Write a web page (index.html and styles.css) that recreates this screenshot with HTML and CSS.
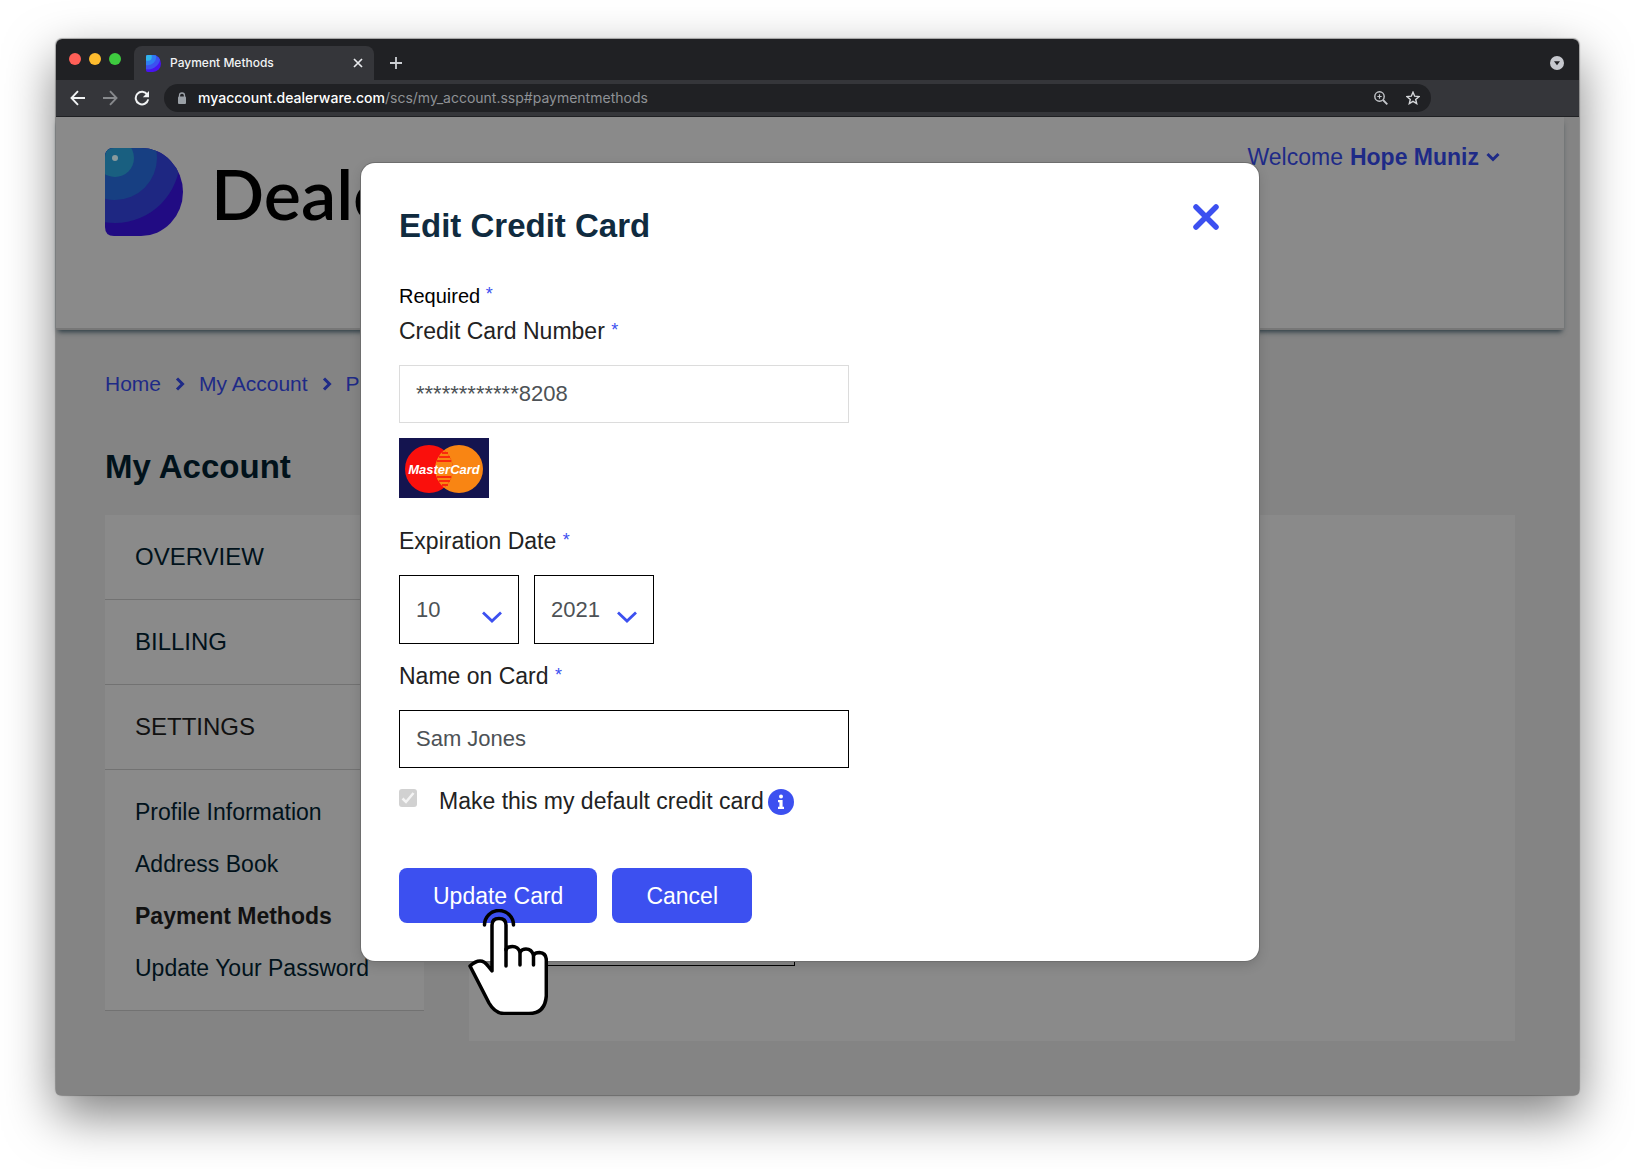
FILE: index.html
```html
<!DOCTYPE html>
<html lang="en">
<head>
<meta charset="utf-8">
<title>Payment Methods</title>
<link rel="stylesheet" href="styles.css">
</head>
<body>
<div class="window">
  <div class="tabstrip">
    <div class="lights"><span class="light red"></span><span class="light yellow"></span><span class="light green"></span></div>
    <div class="tab">
      <svg class="favicon" viewBox="0 0 78 88"><use href="#brand-bright"/></svg>
      <span class="tab-title">Payment Methods</span>
      <button class="chrome-btn" aria-label="Close tab"><svg width="10" height="10" viewBox="0 0 10 10"><path d="M1 1l8 8M9 1l-8 8" stroke="#e8eaed" stroke-width="1.7"/></svg></button>
    </div>
    <button class="chrome-btn new-tab" aria-label="New tab"><svg width="12" height="12" viewBox="0 0 12 12"><path d="M6 0v12M0 6h12" stroke="#cdd0d4" stroke-width="1.8"/></svg></button>
    <button class="chrome-btn tab-search" aria-label="Search tabs"><svg width="14" height="14" viewBox="0 0 14 14"><circle cx="7" cy="7" r="7" fill="#c6c8ce"/><path d="M4 5.2h6L7 9.2z" fill="#202124"/></svg></button>
  </div>
  <div class="toolbar">
    <button class="chrome-btn" aria-label="Back"><svg width="16" height="16" viewBox="0 0 16 16" fill="none" stroke="#f1f3f4" stroke-width="1.9"><path d="M15 8H2M8 1.2L1.5 8 8 14.8"/></svg></button>
    <button class="chrome-btn" aria-label="Forward"><svg width="16" height="16" viewBox="0 0 16 16" fill="none" stroke="#87898c" stroke-width="1.9"><path d="M1 8h13M8 1.2L14.500 8 8 14.8"/></svg></button>
    <button class="chrome-btn" aria-label="Reload"><svg width="16" height="16" viewBox="0 0 16 16"><path d="M13.300 4.600A6.300 6.300 0 1 0 14.200 9.400" fill="none" stroke="#f1f3f4" stroke-width="2"/><path d="M15 1v6.200H8.800z" fill="#f1f3f4"/></svg></button>
    <div class="address">
      <svg width="10" height="13" viewBox="0 0 10 13"><path d="M2.500 6V3.500a2.500 2.500 0 0 1 5 0V6" fill="none" stroke="#9aa0a6" stroke-width="1.300"/><rect x="1" y="4.500" width="8" height="7.500" rx="1" fill="#9aa0a6"/></svg>
      <span class="url"><b>myaccount.dealerware.com</b>/scs/my_account.ssp#paymentmethods</span>
      <button class="chrome-btn" aria-label="Zoom"><svg width="14" height="14" viewBox="0 0 14 14" fill="none" stroke="#c4c7cb"><circle cx="5.500" cy="5.500" r="4.700" stroke-width="1.400"/><path d="M9 9l4.300 4.300" stroke-width="1.800"/><path d="M5.500 3.300v4.400M3.300 5.500h4.400" stroke-width="1.200"/></svg></button>
      <button class="chrome-btn" aria-label="Bookmark"><svg width="14" height="14" viewBox="0 0 14 14"><path d="M7 1.200l1.700 4 4.300.4-3.300 2.800 1 4.200L7 10.400l-3.700 2.200 1-4.200L1 5.600l4.300-.4z" fill="none" stroke="#d5d7da" stroke-width="1.400"/></svg></button>
    </div>
  </div>
  <div class="viewport">
    <div class="page">
      <header class="site-header">
        <a class="brand" href="#">
          <svg class="brand-mark" viewBox="0 0 78 88" aria-hidden="true">
            <defs>
              <clipPath id="mark"><path d="M9 0H36A42 44 0 0 1 36 88H9Q0 88 0 79V9Q0 0 9 0Z"/></clipPath>
              <g id="brand-bright" clip-path="url(#mark)"><path fill="#4713f0" d="M0 0h78v88H0z"/><circle cx="10" cy="10" r="65" fill="#3c50f0"/><circle cx="10" cy="10" r="43" fill="#2f7df2"/><circle cx="10" cy="10" r="20" fill="#31b4ea"/></g>
            </defs>
            <g clip-path="url(#mark)"><path fill="#210b83" d="M0 0h78v88H0z"/><circle cx="10" cy="10" r="65" fill="#1e2782"/><circle cx="10" cy="10" r="42" fill="#173f82"/><circle cx="10" cy="10" r="19" fill="#195f80"/><circle cx="10" cy="10" r="3" fill="#8a9a9c"/></g>
          </svg>
          <span class="brand-name">Deale</span>
        </a>
        <a class="welcome" href="#">Welcome <b>Hope Muniz</b>
          <svg width="14" height="10" viewBox="0 0 14 10"><path d="M1.500 2L7 7.500 12.500 2" fill="none" stroke="#1e2a87" stroke-width="3"/></svg>
        </a>
      </header>
      <nav class="crumbs" aria-label="Breadcrumb">
        <a href="#">Home</a>
        <svg width="10" height="14" viewBox="0 0 10 14"><path d="M2 1.500L7.500 7 2 12.500" fill="none" stroke="#1e2a87" stroke-width="3"/></svg>
        <a href="#">My Account</a>
        <svg width="10" height="14" viewBox="0 0 10 14"><path d="M2 1.500L7.500 7 2 12.500" fill="none" stroke="#1e2a87" stroke-width="3"/></svg>
        <a href="#">Payment Methods</a>
      </nav>
      <h1 class="page-title">My Account</h1>
      <div class="columns">
        <nav class="sidebar" aria-label="My Account">
          <a class="section" href="#">OVERVIEW</a>
          <a class="section" href="#">BILLING</a>
          <a class="section open" href="#">SETTINGS</a>
          <div class="links">
            <a href="#">Profile Information</a>
            <a href="#">Address Book</a>
            <a class="current" href="#">Payment Methods</a>
            <a href="#">Update Your Password</a>
          </div>
        </nav>
        <main class="content"><div class="card-box"></div></main>
      </div>
      <div class="modal-layer">
        <form class="modal" role="dialog" aria-labelledby="dialog-title">
          <div class="modal-head">
            <h2 id="dialog-title">Edit Credit Card</h2>
            <button type="button" class="close" aria-label="Close"><svg width="26" height="26" viewBox="0 0 26 26"><path d="M3 3l20 20M23 3L3 23" stroke="#3c50f0" stroke-width="5.500" stroke-linecap="round"/></svg></button>
          </div>
          <p class="required">Required <i>*</i></p>
          <label class="label" for="number">Credit Card Number <i>*</i></label>
          <input class="text disabled" id="number" value="************8208" readonly>
          <svg class="mastercard" viewBox="0 0 90 60" role="img" aria-label="MasterCard">
            <path fill="#14144f" d="M0 0h90v60H0z"/>
            <circle cx="60" cy="31" r="24" fill="#f98513"/><circle cx="30" cy="31" r="24" fill="#fa0f0c"/>
            <path d="M45 12.300A24 24 0 0 1 45 49.700A24 24 0 0 1 45 12.300Z" fill="#f98513"/>
            <path d="M43 15h6M40 19h11M38 23h14M38 39h14M40 43h11M43 47h6" stroke="#fa2a0c" stroke-width="2"/>
            <text class="mc-name" x="45" y="36" text-anchor="middle">MasterCard</text>
          </svg>
          <label class="label" for="month">Expiration Date <i>*</i></label>
          <div class="selects">
            <select id="month" aria-label="Expiration month"><option>10</option></select>
            <select id="year" aria-label="Expiration year"><option>2021</option></select>
          </div>
          <label class="label name-label" for="name">Name on Card <i>*</i></label>
          <input class="text" id="name" value="Sam Jones">
          <div class="default-row">
            <input type="checkbox" id="default" checked disabled>
            <label for="default">Make this my default credit card</label>
            <svg class="info" width="26" height="26" viewBox="0 0 26 26"><circle cx="13" cy="13" r="13" fill="#3c50f0"/><circle cx="13" cy="7.500" r="2" fill="#fff"/><path d="M10 11h4.600v6.800H16V20h-6v-2.200h1.400v-4.600H10z" fill="#fff"/></svg>
          </div>
          <div class="actions">
            <button type="button" class="primary">Update Card
              <svg class="pointer" viewBox="0 0 80 106" aria-hidden="true">
                <path d="M16.500 16A14 14 0 0 1 45.500 16" fill="none" stroke="#000" stroke-width="3.500" stroke-linecap="round"/>
                <path d="M24 62V16Q24 9.500 31 9.500T38 16V41Q39 37.500 44.500 37.500Q50 37.500 52 43Q54 40 58 40Q63.500 40 65.500 46Q67 43.500 71.500 43.500Q78.300 44 78.300 51V87Q77 104.500 61 104.500H36Q27 104.500 21 94L2 57Q13 47 20 57Z" fill="#fff" stroke="#000" stroke-width="3.500" stroke-linejoin="round"/>
                <path d="M38 40V57M52 43V56M65.500 46V56" fill="none" stroke="#000" stroke-width="3.500" stroke-linecap="round"/>
              </svg>
            </button>
            <button type="button" class="primary">Cancel</button>
          </div>
        </form>
      </div>
    </div>
  </div>
</div>
</body>
</html>
```
FILE: styles.css
```css
* { box-sizing: border-box; }
body {
  margin: 0;
  padding: 39px 56px 74px;
  background: #fff;
  font: 23px/28px "Liberation Sans", Arial, sans-serif;
  color: #222;
}
button { font: inherit; border: 0; padding: 0; background: none; }
a { text-decoration: none; }
svg { display: block; flex: none; }
h1, h2, p { margin: 0; }

.window {
  border-radius: 6px;
  box-shadow: 0 0 1px 1px rgba(0, 0, 0, .3), 0 20px 50px rgba(0, 0, 0, .5);
}

/* Browser chrome */
.chrome-btn { display: flex; flex: none; }
.tabstrip {
  display: flex;
  align-items: flex-end;
  height: 41px;
  border-radius: 6px 6px 0 0;
  background: #202124;
}
.lights { display: flex; gap: 8px; padding: 0 13px 15px; }
.light { width: 12px; height: 12px; border-radius: 50%; }
.red { background: #ff5f57; }
.yellow { background: #febc2e; }
.green { background: #3ecb3f; }
.tab {
  display: flex;
  align-items: center;
  width: 240px;
  height: 34px;
  padding: 0 11px 0 12px;
  border-radius: 8px 8px 0 0;
  background: #35363a;
}
.favicon { width: 15px; height: 17px; }
.tab-title {
  flex: 1;
  padding-left: 9px;
  font: 500 12px/16px Inter, sans-serif;
  color: #f1f3f4;
}
.new-tab { margin: 0 0 11px 16px; }
.tab-search { margin: 0 15px 10px auto; }
.toolbar {
  display: flex;
  align-items: center;
  gap: 16px;
  height: 37px;
  padding: 0 148px 0 14px;
  border-bottom: 1px solid #202124;
  background: #35363a;
}
.address {
  display: flex;
  flex: 1;
  align-items: center;
  gap: 18px;
  height: 28px;
  margin-left: -2px;
  padding: 0 11px 0 13px;
  border-radius: 14px;
  background: #202124;
}
.url {
  flex: 1;
  margin-left: -7px;
  font: 14px/20px Inter, sans-serif;
  color: #8f9296;
}
.url b { font-weight: 500; color: #fff; }

/* Page behind the dialog */
.viewport {
  padding-right: 15px;
  border-radius: 0 0 4px 4px;
  background: #848484;
}
.page { position: relative; padding-bottom: 54px; }
.site-header {
  display: flex;
  justify-content: space-between;
  align-items: flex-start;
  height: 213px;
  padding: 31px 64px 0 49px;
  border-bottom: 2px solid #777;
  background: #8a8a8a;
  box-shadow: 0 4px 5px -2px #2c3c44;
}
.brand { display: flex; align-items: center; gap: 28px; color: #000; }
.brand-mark { width: 78px; height: 88px; }
.brand-name {
  padding-top: 2px;
  font: 600 70px/86px Lato, sans-serif;
}
.welcome {
  display: flex;
  align-items: center;
  gap: 7px;
  margin-top: -5px;
  color: #1e2a87;
}
.crumbs {
  display: flex;
  align-items: center;
  gap: 14px;
  padding: 40px 49px 0;
  font-size: 21px;
}
.crumbs a { color: #1e2a87; }
.page-title {
  padding: 49px 49px 0;
  font-size: 33px;
  line-height: 40px;
  color: #01121b;
}
.columns {
  display: flex;
  align-items: flex-start;
  gap: 45px;
  padding: 28px 49px 0;
}
.sidebar {
  width: 319px;
  border-bottom: 1px solid #727272;
  background: #8a8a8a;
}
.section {
  display: block;
  padding: 28px 30px;
  border-bottom: 1px solid #727272;
  font-size: 24px;
  color: #01121b;
}
.links {
  display: flex;
  flex-direction: column;
  gap: 24px;
  padding: 28px 30px;
}
.links a { color: #01121b; white-space: nowrap; }
.sidebar .open, .links .current { color: #111; }
.current { font-weight: bold; }
.content {
  display: flex;
  flex: 1;
  align-items: flex-end;
  height: 526px;
  padding: 0 30px 75px;
  background: #8a8a8a;
}
.card-box { width: 296px; height: 300px; border: 1px solid #000; }

/* Dialog */
.modal-layer {
  position: absolute;
  inset: 0;
  display: flex;
  justify-content: center;
  align-items: flex-start;
  padding-top: 46px;
}
.modal {
  display: flex;
  flex-direction: column;
  align-items: flex-start;
  width: 898px;
  padding: 38px;
  border-radius: 14px;
  background: #fff;
  box-shadow: 0 0 0 1px #6e6e6e, 0 4px 12px rgba(0, 0, 0, .15);
}
.modal-head {
  display: flex;
  justify-content: space-between;
  align-items: flex-start;
  width: 100%;
}
.close { padding: 3px 2px 0 0; }
.modal h2 { padding-top: 5px; font-size: 33px; line-height: 40px; color: #102b3f; }
.modal i { font-style: normal; font-size: 18px; vertical-align: 3px; line-height: 1; color: #3c50f0; }
.required { margin-top: 36px; font-size: 20px; color: #000; }
.label { margin-top: 7px; }
.text {
  width: 450px;
  height: 58px;
  margin-top: 20px;
  padding: 0 16px;
  border: 1px solid #000;
  font: inherit;
  font-size: 22px;
  color: #4d5256;
}
.disabled { border-color: #dcdcdc; }
.mastercard { width: 90px; height: 60px; margin: 15px 0 22px; }
.mc-name { font: italic bold 13px "Liberation Sans", sans-serif; fill: #fff; }
.selects { display: flex; gap: 15px; margin-top: 20px; }
select {
  width: 120px;
  height: 69px;
  padding: 0 16px;
  appearance: none;
  border: 1px solid #000;
  border-radius: 0;
  font: inherit;
  font-size: 22px;
  color: #4d5256;
  background: #fff url("data:image/svg+xml,%3Csvg xmlns='http://www.w3.org/2000/svg' width='20' height='12'%3E%3Cpath d='M1 1.500L10 10L19 1.500' fill='none' stroke='%233c50f0' stroke-width='2.800'/%3E%3C/svg%3E") no-repeat right 16px top 35px;
}
.name-label { margin-top: 18px; }
.default-row { display: flex; align-items: center; margin-top: 19px; }
.default-row label { padding: 0 4px 0 22px; }
.info { margin-top: 2px; }
.default-row input {
  width: 18px;
  height: 18px;
  margin: 0 0 6px;
  appearance: none;
  border-radius: 3px;
  background: #d1d1d1 url("data:image/svg+xml,%3Csvg xmlns='http://www.w3.org/2000/svg' width='18' height='18'%3E%3Cpath d='M3.500 9.500L7 13L14.500 4' fill='none' stroke='%23f4f4f4' stroke-width='2.500'/%3E%3C/svg%3E");
}
.actions { display: flex; gap: 15px; margin-top: 53px; }
.primary {
  position: relative;
  height: 55px;
  padding: 0 34px;
  border-radius: 8px;
  background: #3c50f0;
  color: #fff;
}
.pointer {
  position: absolute;
  z-index: 1;
  left: 69px;
  top: 41px;
  width: 80px;
  height: 106px;
}
```
